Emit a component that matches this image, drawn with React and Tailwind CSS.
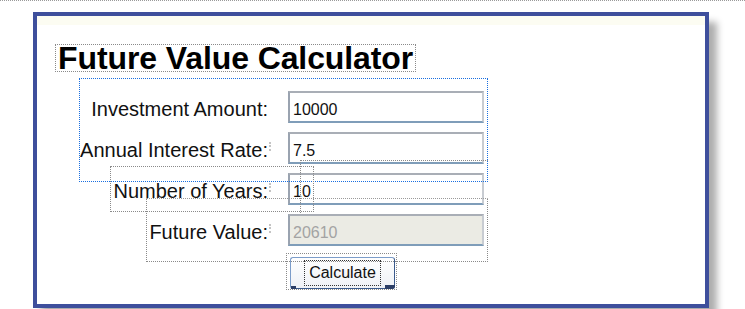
import React from "react";

function Row({ label, value, disabled, mark }) {
  return (
    <div className="flex items-center h-[32px]">
      <div className="w-[235px] flex justify-end items-center">
        <span className="text-[20px] leading-none text-[#111] pt-[3px]">{label}</span>
        {mark ? (
          <span className="ml-[1px] mb-[4px] w-[3px] h-[9px] border-l-2 border-dotted border-[#c4c4c4]" />
        ) : (
          <span className="ml-[1px] w-[3px]" />
        )}
      </div>
      <div
        className={
          "ml-[16px] w-[196px] h-[32px] border-2 border-t-[#a9aeb6] border-l-[#9aa3b0] border-r-[#c8ccd2] border-b-[#7f9db9] flex items-center pl-[3px] pt-[5px] text-[16px] leading-none " +
          (disabled ? "bg-[#ebebe4] text-[#a3a3a3]" : "bg-white text-[#111]")
        }
      >
        {value}
      </div>
    </div>
  );
}

export default function App() {
  return (
    <div
      className="relative w-[745px] h-[309px] bg-white overflow-hidden border-t border-dotted border-[#9a9a9a]"
      style={{ fontFamily: '"Liberation Sans", Arial, sans-serif' }}
    >
      <div className="ml-[33px] mt-[11px] w-[676px] h-[296px] border-4 border-[#3e4f9c] bg-white shadow-[8px_10px_7px_rgba(0,0,0,0.32)]">
        <div className="h-[9px] bg-[#fcfcf2]" />
        <div className="pl-[18px] pt-[19px]">
          <h1 className="inline-block border border-dotted border-[#8a8a8a] px-[2px] text-[32px] font-bold leading-[26px] h-[28px] text-black tracking-[-0.1px]">
            Future Value Calculator
          </h1>
        </div>
        <div className="mt-[15px] flex flex-col gap-[9px]">
          <Row label="Investment Amount:" value="10000" />
          <Row label="Annual Interest Rate:" value="7.5" mark />
          <Row label="Number of Years:" value="10" mark />
          <Row label="Future Value:" value="20610" disabled mark />
        </div>
        <div className="ml-[253px] mt-[11px]">
          <button className="relative w-[105px] h-[32px] rounded-[3px] border border-[#7b9cc9] border-b-[#3a5a8c] border-r-[#3a5a8c] bg-gradient-to-b from-white to-[#eef1f6] text-[16px] leading-none text-[#111] flex items-center justify-center">
            <span className="border border-dotted border-[#333] px-[4px] py-[4px]">Calculate</span>
            <span className="absolute left-0 bottom-[-1px] w-[5px] h-[3px] bg-[#2c3e66]" />
            <span className="absolute right-[-1px] bottom-[-1px] w-[10px] h-[4px] bg-[#2c3e66] rounded-br-[3px]" />
          </button>
        </div>
      </div>

      {/* design-mode selection outlines */}
      <div className="absolute left-[79px] top-[77px] w-[409px] h-[104px] border border-dotted border-[#1a6fe0] pointer-events-none" />
      <div className="absolute left-[110px] top-[165px] w-[204px] h-[46px] border border-dotted border-[#8a8a8a] pointer-events-none" />
      <div className="absolute left-[300px] top-[159px] w-[188px] h-[53px] border-l border-t border-dotted border-[#8a8a8a] pointer-events-none" />
      <div className="absolute left-[146px] top-[197px] w-[342px] h-[64px] border border-dotted border-[#8a8a8a] border-t-[#9a9a9a] pointer-events-none" />
      <div className="absolute left-[286px] top-[252px] w-[111px] h-[37px] border border-dotted border-[#8a8a8a] pointer-events-none" />
    </div>
  );
}
